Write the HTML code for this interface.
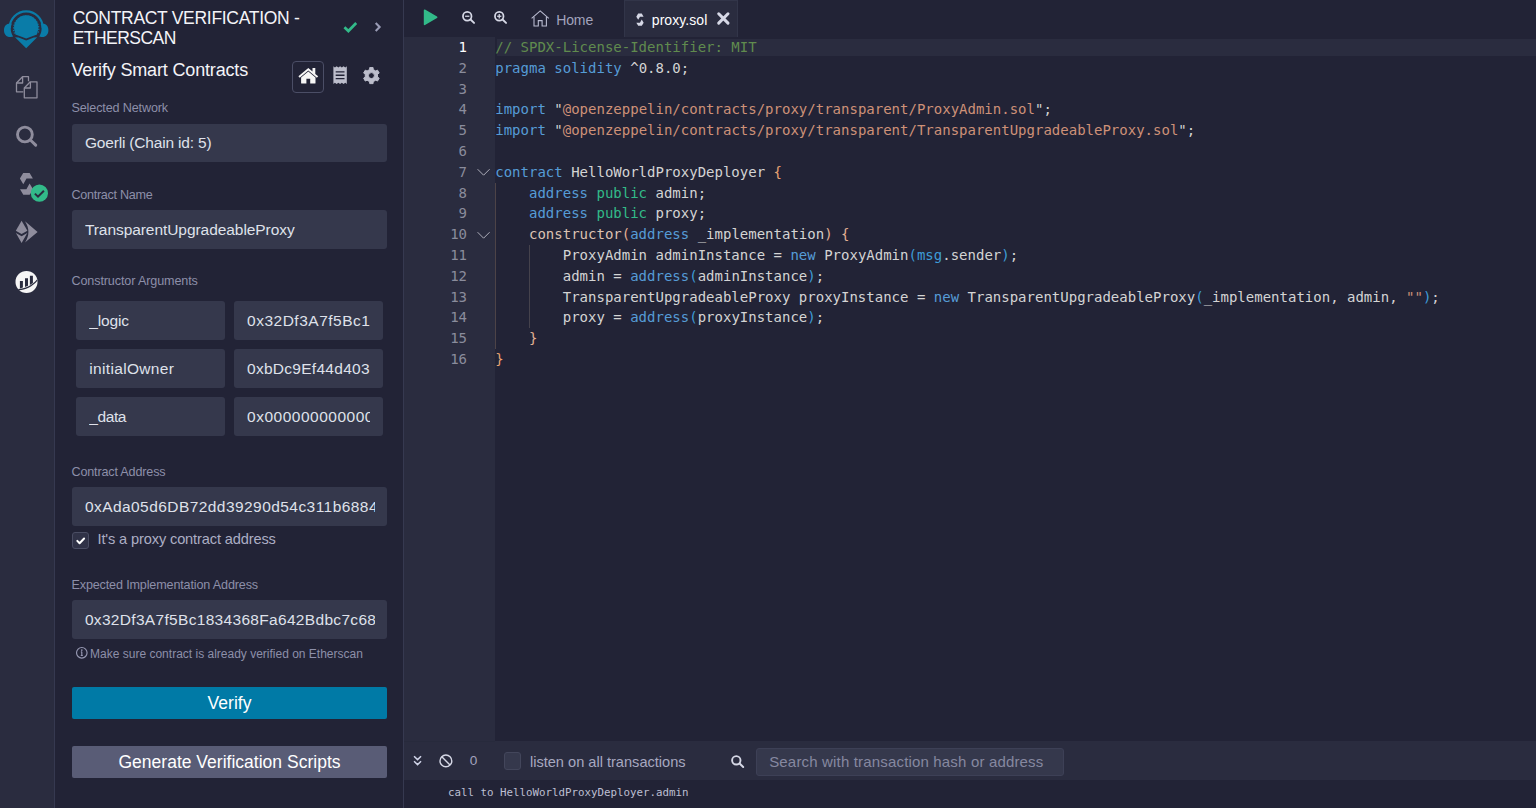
<!DOCTYPE html>
<html lang="en">
<head>
<meta charset="utf-8">
<title>Remix - Ethereum IDE</title>
<style>
html,body{margin:0;padding:0;}
body{width:1536px;height:808px;overflow:hidden;background:#222336;position:relative;font-family:"Liberation Sans",sans-serif;}
.t{position:absolute;white-space:pre;display:block;}
.b{position:absolute;}
.m{font-family:"DejaVu Sans Mono","Liberation Mono",monospace;}
svg{position:absolute;overflow:visible;}
.code{position:absolute;left:495.25px;white-space:pre;font-family:"DejaVu Sans Mono","Liberation Mono",monospace;font-size:14px;line-height:21px;height:21px;color:#d4d4d4;letter-spacing:0.004px;}
.ln{position:absolute;left:404px;width:63px;text-align:right;white-space:pre;font-family:"DejaVu Sans Mono","Liberation Mono",monospace;font-size:14px;line-height:21px;height:21px;color:#8a8c9c;}
.k{color:#569cd6}.c{color:#608b4e}.s{color:#ce9178}.g{color:#32ba89}.o{color:#e8a272}.p{color:#3e9cd6}.q{color:#dcc2b2}.r{color:#e2b094}
</style>
</head>
<body>

<nav id="icon-panel">
<div class="b " style="left:0px;top:0px;width:54px;height:808px;background:#2a2c3f;"></div>
<div class="b " style="left:54px;top:0px;width:1px;height:808px;background:#363950;"></div>
<svg style="left:0px;top:0px" width="54" height="54" viewBox="0 0 54 54" ><path d="M9.6 28 A16.6 16.6 0 0 1 42.8 28" fill="none" stroke="#0a7ca8" stroke-width="2.2"/><path d="M11.2 23.6 C6 23.2 4 26.6 4 30.2 C4 34.2 6.4 37.4 11 37 L13.2 36.4 C10.4 32.4 10.2 27.6 11.8 23.7 Z" fill="#0a7ca8"/><path d="M41.2 23.6 C46.4 23.2 48.4 26.6 48.4 30.2 C48.4 34.2 46 37.4 41.4 37 L39.2 36.4 C42 32.4 42.2 27.6 40.6 23.7 Z" fill="#0a7ca8"/><path d="M26.2 15.2 A12.2 12.2 0 0 1 37.6 31.8 L37 34.4 L26.2 38.4 L15.4 34.4 L14.8 31.8 A12.2 12.2 0 0 1 26.2 15.2 Z" fill="#0a7ca8"/><path d="M14.6 33.6 A12.6 12.6 0 1 1 37.8 33.6" fill="none" stroke="#0a7ca8" stroke-width="1.2" stroke-dasharray="1.3 1.3"/><path d="M15 37.3 L18.6 37.4 L26.2 40.6 L33.8 37.4 L37.2 37.3 L26.2 48.2 Z" fill="#0a7ca8"/></svg>
<svg style="left:15px;top:75px" width="24" height="25" viewBox="0 0 24 25" ><g fill="none" stroke="#8f8d9d" stroke-width="1.3" stroke-linejoin="round"><path d="M8.3 16.8 H1.5 V8 L7.5 1.7 H13.5 V6.3"/><path d="M7.6 1.8 V8 H1.6"/><path d="M9.3 13 L15.3 6.8 H22 V22.8 H9.3 Z"/><path d="M15.4 6.9 V13 H9.4"/></g></svg>
<svg style="left:15px;top:125px" width="24" height="23" viewBox="0 0 24 23" ><circle cx="9.9" cy="9.5" r="7.4" fill="none" stroke="#8f8d9d" stroke-width="2.9"/><path d="M15.4 15 L20.7 20.1" stroke="#8f8d9d" stroke-width="3" stroke-linecap="round"/></svg>
<svg style="left:19px;top:172px" width="15" height="24" viewBox="0 0 15 24" ><path d="M4.2 1 H10.6 L13.9 6.6 H7.5 L4.3 12.2 L0.9 6.6 Z" fill="#8f8d9d"/><path d="M10.7 22.8 H4.3 L1 17.2 H7.4 L10.6 11.6 L14 17.2 Z" fill="#8f8d9d"/></svg>
<svg style="left:30px;top:184px" width="19" height="19" viewBox="0 0 19 19" ><circle cx="9.4" cy="9.2" r="8.6" fill="#32ba89"/><path d="M4.9 9.6 L8 12.7 L13.9 6.7" fill="none" stroke="#2a2c3f" stroke-width="2"/></svg>
<svg style="left:15px;top:220px" width="24" height="24" viewBox="0 0 24 24" ><path d="M6.6 0.8 L12.4 10.7 L6.6 14 L0.8 10.7 Z" fill="#8f8d9d"/><path d="M0.9 13 L6.6 16.3 L12.3 13 L6.6 22.9 Z" fill="#8f8d9d"/><path d="M10 1.2 L22.6 11.9 L10 22.6 C14.6 15.6 14.6 8.2 10 1.2 Z" fill="#8f8d9d"/></svg>
<svg style="left:15px;top:270.1px" width="23" height="23" viewBox="0 0 23 23" ><circle cx="11.5" cy="11.9" r="11" fill="#f6f6f6"/><path d="M4.9 10.9 H7.9 V17.6 L4.9 18.4 Z M10 8.3 H13 V15.8 L10 17.1 Z M14.9 5.7 H17.9 V13 L14.9 14.9 Z" fill="#2a2c3f"/><path d="M3 18.9 C10 18.6 16.6 15.6 22 9.4 L22.4 10.8 C17 17 10.4 20 4 20.2 Z" fill="#2a2c3f"/></svg>
</nav>
<aside id="side-panel">
<svg style="left:343px;top:21px" width="15" height="12" viewBox="0 0 15 12" ><path d="M1.4 6.2 L5.4 10 L13.2 2" fill="none" stroke="#32ba89" stroke-width="2.7"/></svg>
<svg style="left:374px;top:21.5px" width="8" height="10" viewBox="0 0 8 10" ><path d="M1.7 1.1 L5.6 5 L1.7 8.9" fill="none" stroke="#9a9cb6" stroke-width="2.1"/></svg>
<div class="b" style="left:292.2px;top:60.8px;width:32px;height:32.6px;box-sizing:border-box;border:1px solid #4b4e66;border-radius:4px;"></div>
<svg style="left:298.1px;top:66.6px" width="21" height="17" viewBox="0 0 21 17" ><path d="M10.3 4.6 L3.1 10.5 V15.9 A0.6 0.6 0 0 0 3.7 16.5 H8.4 V11.7 H12.2 V16.5 H16.9 A0.6 0.6 0 0 0 17.5 15.9 V10.5 Z" fill="#f6f6f6"/><path d="M0.4 9.3 L1.7 10.8 L10.3 3.6 L18.9 10.8 L20.2 9.3 L17.3 6.9 V1.1 H14.5 V4.5 L10.3 1 Z" fill="#f6f6f6"/></svg>
<svg style="left:332.7px;top:66px" width="14.4" height="18.2" viewBox="0 0 15 18.5" preserveAspectRatio="none"><path d="M0.4 0.3 L2 1.4 L3.8 0.2 L5.6 1.4 L7.4 0.2 L9.2 1.4 L11 0.2 L12.8 1.4 L14.4 0.3 V18.2 L12.8 17.1 L11 18.3 L9.2 17.1 L7.4 18.3 L5.6 17.1 L3.8 18.3 L2 17.1 L0.4 18.2 Z M2.8 5.3 V6.5 H12 V5.3 Z M2.8 8.7 V10.1 H12 V8.7 Z M2.8 12.2 V13.6 H12 V12.2 Z" fill="#bcbdcb" fill-rule="evenodd"/></svg>
<svg style="left:362px;top:66px" width="19" height="19" viewBox="0 0 19 19" ><path d="M7.61 3.56 L7.71 1.58 L11.09 1.58 L11.19 3.56 L13.74 5.03 L15.51 4.13 L17.19 7.05 L15.53 8.13 L15.53 11.07 L17.19 12.15 L15.51 15.07 L13.74 14.17 L11.19 15.64 L11.09 17.62 L7.71 17.62 L7.61 15.64 L5.06 14.17 L3.29 15.07 L1.61 12.15 L3.27 11.07 L3.27 8.13 L1.61 7.05 L3.29 4.13 L5.06 5.03 Z M6.40 9.60 a3.0 3.0 0 1 0 6.0 0 a3.0 3.0 0 1 0 -6.0 0 Z" fill="#bcbdcb" fill-rule="evenodd" stroke="#bcbdcb" stroke-width="1" stroke-linejoin="round"/></svg>
<div class="b " style="left:403px;top:0px;width:1px;height:808px;background:#363950;"></div>
<span class="t " style="left:72.70px;top:4.14px;font-size:17.5px;line-height:28px;height:28px;color:#f4f4f8;letter-spacing:-0.3px;">CONTRACT VERIFICATION -</span>
<span class="t " style="left:72.70px;top:23.94px;font-size:17.5px;line-height:28px;height:28px;color:#f4f4f8;letter-spacing:-0.54px;">ETHERSCAN</span>
<span class="t " style="left:71.50px;top:56.36px;font-size:18px;line-height:29px;height:29px;color:#f4f4f8;letter-spacing:-0.16px;">Verify Smart Contracts</span>
<span class="t " style="left:71.50px;top:97.73px;font-size:12.6px;line-height:20px;height:20px;color:#8d8fa9;letter-spacing:-0.14px;">Selected Network</span>
<div class="b " style="left:71.8px;top:123.6px;width:315.6px;height:38.8px;background:#35384c;border-radius:3px;"></div>
<span class="t " style="left:84.90px;top:130.33px;font-size:15.5px;line-height:25px;height:25px;color:#dfe1ea;letter-spacing:-0.18px;width:289.40000000000003px;overflow:hidden;">Goerli (Chain id: 5)</span>
<span class="t " style="left:71.50px;top:184.83px;font-size:12.6px;line-height:20px;height:20px;color:#8d8fa9;letter-spacing:-0.29px;">Contract Name</span>
<div class="b " style="left:71.8px;top:210.3px;width:315.6px;height:38.8px;background:#35384c;border-radius:3px;"></div>
<span class="t " style="left:84.90px;top:217.23px;font-size:15.5px;line-height:25px;height:25px;color:#dfe1ea;letter-spacing:-0.06px;width:289.40000000000003px;overflow:hidden;">TransparentUpgradeableProxy</span>
<span class="t " style="left:71.50px;top:271.43px;font-size:12.6px;line-height:20px;height:20px;color:#8d8fa9;letter-spacing:-0.12px;">Constructor Arguments</span>
<div class="b " style="left:76.2px;top:301.2px;width:148.8px;height:38.8px;background:#35384c;border-radius:3px;"></div>
<span class="t " style="left:89.30px;top:307.93px;font-size:15.5px;line-height:25px;height:25px;color:#dfe1ea;letter-spacing:-0.14px;width:122.60000000000001px;overflow:hidden;">_logic</span>
<div class="b " style="left:233.8px;top:301.2px;width:149.4px;height:38.8px;background:#35384c;border-radius:3px;"></div>
<span class="t " style="left:247.00px;top:307.93px;font-size:15.5px;line-height:25px;height:25px;color:#dfe1ea;letter-spacing:0.51px;width:122.6px;overflow:hidden;">0x32Df3A7f5Bc1</span>
<div class="b " style="left:76.2px;top:349.0px;width:148.8px;height:38.8px;background:#35384c;border-radius:3px;"></div>
<span class="t " style="left:89.30px;top:355.73px;font-size:15.5px;line-height:25px;height:25px;color:#dfe1ea;letter-spacing:0.33px;width:122.60000000000001px;overflow:hidden;">initialOwner</span>
<div class="b " style="left:233.8px;top:349.0px;width:149.4px;height:38.8px;background:#35384c;border-radius:3px;"></div>
<span class="t " style="left:247.00px;top:355.73px;font-size:15.5px;line-height:25px;height:25px;color:#dfe1ea;letter-spacing:0.28px;width:122.6px;overflow:hidden;">0xbDc9Ef44d403</span>
<div class="b " style="left:76.2px;top:396.8px;width:148.8px;height:38.8px;background:#35384c;border-radius:3px;"></div>
<span class="t " style="left:89.30px;top:403.53px;font-size:15.5px;line-height:25px;height:25px;color:#dfe1ea;letter-spacing:-0.4px;width:122.60000000000001px;overflow:hidden;">_data</span>
<div class="b " style="left:233.8px;top:396.8px;width:149.4px;height:38.8px;background:#35384c;border-radius:3px;"></div>
<span class="t " style="left:247.00px;top:403.53px;font-size:15.5px;line-height:25px;height:25px;color:#dfe1ea;letter-spacing:0.51px;width:122.6px;overflow:hidden;">0x000000000000</span>
<span class="t " style="left:71.50px;top:461.53px;font-size:12.6px;line-height:20px;height:20px;color:#8d8fa9;letter-spacing:-0.17px;">Contract Address</span>
<div class="b " style="left:71.8px;top:487.1px;width:315.6px;height:38.8px;background:#35384c;border-radius:3px;"></div>
<span class="t " style="left:84.90px;top:494.23px;font-size:15.5px;line-height:25px;height:25px;color:#dfe1ea;letter-spacing:0.44px;width:289.8px;overflow:hidden;">0xAda05d6DB72dd39290d54c311b6884</span>
<div class="b" style="left:71.9px;top:531.9px;width:17.4px;height:17.5px;box-sizing:border-box;background:#303247;border:1px solid #4a4d63;border-radius:3px;"></div>
<svg style="left:75.6px;top:537px" width="10" height="8" viewBox="0 0 10 8"><path d="M1.3 3.9 L3.6 6.2 L8.1 1.5" fill="none" stroke="#fff" stroke-width="2" stroke-linecap="round" stroke-linejoin="round"/></svg>
<span class="t " style="left:97.50px;top:528.24px;font-size:14.6px;line-height:23px;height:23px;color:#acaec4;letter-spacing:-0.13px;">It's a proxy contract address</span>
<span class="t " style="left:71.50px;top:574.83px;font-size:12.6px;line-height:20px;height:20px;color:#8d8fa9;letter-spacing:-0.15px;">Expected Implementation Address</span>
<div class="b " style="left:71.8px;top:600.2px;width:315.6px;height:38.8px;background:#35384c;border-radius:3px;"></div>
<span class="t " style="left:84.90px;top:607.33px;font-size:15.5px;line-height:25px;height:25px;color:#dfe1ea;letter-spacing:0.316px;width:289.8px;overflow:hidden;">0x32Df3A7f5Bc1834368Fa642Bdbc7c68</span>
<svg style="left:75.7px;top:647.2px" width="11.6" height="11.6" viewBox="0 0 11 11"><circle cx="5.5" cy="5.5" r="5" fill="none" stroke="#9698b2" stroke-width="1.1"/><path d="M5.5 4.6V8.1M4.5 8.1H6.5M4.6 4.6H5.6" stroke="#9698b2" stroke-width="1.1" fill="none"/><circle cx="5.5" cy="2.9" r="0.8" fill="#9698b2"/></svg>
<span class="t " style="left:90.10px;top:644.84px;font-size:12px;line-height:19px;height:19px;color:#8d8fa9;">Make sure contract is already verified on Etherscan</span>
<div class="b " style="left:71.5px;top:686.6px;width:315.9px;height:32.8px;background:#007aa6;border-radius:2px;"></div>
<span class="t " style="left:71.50px;top:688.84px;font-size:17.5px;line-height:28px;height:28px;color:#ffffff;width:316px;text-align:center;">Verify</span>
<div class="b " style="left:71.5px;top:745.6px;width:315.9px;height:32.8px;background:#595c76;border-radius:2px;"></div>
<span class="t " style="left:71.50px;top:747.54px;font-size:17.5px;line-height:28px;height:28px;color:#ffffff;letter-spacing:0.01px;width:316px;text-align:center;">Generate Verification Scripts</span>
</aside>
<main id="main-panel">
<div class="b " style="left:404px;top:36.8px;width:91px;height:704.5px;background:#2a2c3f;"></div>
<div class="b " style="left:624.2px;top:0px;width:114.2px;height:36.8px;background:#2a2c3f;box-sizing:border-box;border:1px solid #323549;border-bottom:none;"></div>
<span class="t " style="left:556.20px;top:8.75px;font-size:14px;line-height:22px;height:22px;color:#a2a3bd;letter-spacing:-0.11px;">Home</span>
<span class="t " style="left:651.80px;top:8.75px;font-size:14px;line-height:22px;height:22px;color:#ffffff;letter-spacing:0.06px;">proxy.sol</span>
<div class="b " style="left:496.5px;top:39px;width:1039.5px;height:16.9px;background:#2a2c3f;"></div>
<div class="ln" style="top:36.9px;color:#ffffff;">1</div>
<div class="code" style="top:36.9px"><span class="c">// SPDX-License-Identifier: MIT</span></div>
<div class="ln" style="top:57.7px;">2</div>
<div class="code" style="top:57.7px"><span class="k">pragma</span> <span class="k">solidity</span> ^0.8.0;</div>
<div class="ln" style="top:78.5px;">3</div>
<div class="ln" style="top:99.3px;">4</div>
<div class="code" style="top:99.3px"><span class="k">import</span> "<span class="s">@openzeppelin/contracts/proxy/transparent/ProxyAdmin.sol</span>";</div>
<div class="ln" style="top:120.1px;">5</div>
<div class="code" style="top:120.1px"><span class="k">import</span> "<span class="s">@openzeppelin/contracts/proxy/transparent/TransparentUpgradeableProxy.sol</span>";</div>
<div class="ln" style="top:140.9px;">6</div>
<div class="ln" style="top:161.7px;">7</div>
<div class="code" style="top:161.7px"><span class="k">contract</span> HelloWorldProxyDeployer <span class="o">{</span></div>
<div class="ln" style="top:182.5px;">8</div>
<div class="code" style="top:182.5px">    <span class="k">address</span> <span class="g">public</span> admin;</div>
<div class="ln" style="top:203.3px;">9</div>
<div class="code" style="top:203.3px">    <span class="k">address</span> <span class="g">public</span> proxy;</div>
<div class="ln" style="top:224.1px;">10</div>
<div class="code" style="top:224.1px">    <span class="q">constructor</span><span class="r">(</span><span class="k">address</span> _implementation<span class="r">) {</span></div>
<div class="ln" style="top:244.9px;">11</div>
<div class="code" style="top:244.9px">        ProxyAdmin adminInstance = <span class="k">new</span> ProxyAdmin<span class="p">(</span><span class="p">msg</span>.sender<span class="p">)</span>;</div>
<div class="ln" style="top:265.7px;">12</div>
<div class="code" style="top:265.7px">        admin = <span class="k">address</span><span class="p">(</span>adminInstance<span class="p">)</span>;</div>
<div class="ln" style="top:286.5px;">13</div>
<div class="code" style="top:286.5px">        TransparentUpgradeableProxy proxyInstance = <span class="k">new</span> TransparentUpgradeableProxy<span class="p">(</span>_implementation, admin, <span class="s">""</span><span class="p">)</span>;</div>
<div class="ln" style="top:307.3px;">14</div>
<div class="code" style="top:307.3px">        proxy = <span class="k">address</span><span class="p">(</span>proxyInstance<span class="p">)</span>;</div>
<div class="ln" style="top:328.1px;">15</div>
<div class="code" style="top:328.1px">    <span class="r">}</span></div>
<div class="ln" style="top:348.9px;">16</div>
<div class="code" style="top:348.9px"><span class="o">}</span></div>
<div class="b " style="left:495px;top:182.6px;width:1px;height:166.4px;background:#4d4347;"></div>
<div class="b " style="left:529px;top:245.0px;width:1px;height:83.2px;background:#45424c;"></div>
<section id="terminal">
<div class="b " style="left:404px;top:741.1px;width:1132px;height:39.0px;background:#2a2c3f;"></div>
<div class="b " style="left:404px;top:740.6px;width:91px;height:1px;background:#272a3c;"></div>
<span class="t " style="left:469.70px;top:750.29px;font-size:13.6px;line-height:22px;height:22px;color:#a2a3bd;">0</span>
<div class="b " style="left:503.5px;top:752.3px;width:17.7px;height:17.6px;background:#35384c;box-sizing:border-box;border:1px solid #43465b;border-radius:3px;"></div>
<span class="t " style="left:529.90px;top:750.94px;font-size:14.6px;line-height:23px;height:23px;color:#a7a8c0;">listen on all transactions</span>
<div class="b " style="left:755.5px;top:748.3px;width:308.5px;height:27.3px;background:#35384c;box-sizing:border-box;border:1px solid #3d4056;border-radius:3px;"></div>
<span class="t " style="left:769.20px;top:749.80px;font-size:15px;line-height:24px;height:24px;color:#8688a0;letter-spacing:0.17px;">Search with transaction hash or address</span>
<span class="t m" style="left:448.10px;top:783.99px;font-size:10.8px;line-height:17px;height:17px;color:#bdbfd2;">call to HelloWorldProxyDeployer.admin</span>
</section>
<div id="main-icons">
<svg style="left:423px;top:9px" width="15" height="17" viewBox="0 0 15 17" ><path d="M1.6 1.2 L13.6 8.3 L1.6 15.4 Z" fill="#32ba89" stroke="#32ba89" stroke-width="1.6" stroke-linejoin="round"/></svg>
<svg style="left:461.6px;top:10.8px" width="13.6" height="13.6" viewBox="0 0 14 14" ><circle cx="5.4" cy="5.4" r="4.4" fill="none" stroke="#d6d8e6" stroke-width="1.8"/><path d="M8.8 8.8 L12.4 12.2" stroke="#d6d8e6" stroke-width="2" stroke-linecap="round"/><path d="M3.2 5.4 H7.6" stroke="#d6d8e6" stroke-width="1.3"/></svg>
<svg style="left:494.2px;top:10.8px" width="13.6" height="13.6" viewBox="0 0 14 14" ><circle cx="5.4" cy="5.4" r="4.4" fill="none" stroke="#d6d8e6" stroke-width="1.8"/><path d="M8.8 8.8 L12.4 12.2" stroke="#d6d8e6" stroke-width="2" stroke-linecap="round"/><path d="M3.2 5.4 H7.6" stroke="#d6d8e6" stroke-width="1.3"/><path d="M5.4 3.2 V7.6" stroke="#d6d8e6" stroke-width="1.3"/></svg>
<svg style="left:531px;top:9.5px" width="19" height="17" viewBox="0 0 19 17" ><path d="M0.6 8.3 L9.2 0.9 L17.8 8.3" fill="none" stroke="#b9bbd0" stroke-width="1.1"/><path d="M3 6.8 V16 H7.3 V10.6 H11.1 V16 H15.4 V6.8" fill="none" stroke="#b9bbd0" stroke-width="1.1"/></svg>
<svg style="left:635px;top:13.2px" width="10" height="13.5" viewBox="0 0 15 24" ><path d="M4.2 1 H10.6 L13.9 6.6 H7.5 L4.3 12.2 L0.9 6.6 Z" fill="#d6d8e6"/><path d="M10.7 22.8 H4.3 L1 17.2 H7.4 L10.6 11.6 L14 17.2 Z" fill="#d6d8e6"/></svg>
<svg style="left:717px;top:12.2px" width="13" height="13" viewBox="0 0 13 13" ><path d="M1.7 1.8 L11 11.1 M11 1.8 L1.7 11.1" stroke="#d6d8e6" stroke-width="3" stroke-linecap="round"/></svg>
<svg style="left:477px;top:168.1px" width="14" height="9" viewBox="0 0 14 9" ><path d="M0.6 1.2 L6.6 7.2 L12.6 1.2" fill="none" stroke="#aeaeba" stroke-width="1"/></svg>
<svg style="left:477px;top:230.5px" width="14" height="9" viewBox="0 0 14 9" ><path d="M0.6 1.2 L6.6 7.2 L12.6 1.2" fill="none" stroke="#aeaeba" stroke-width="1"/></svg>
<svg style="left:412.5px;top:755px" width="9.3" height="11.5" viewBox="0 0 9 11.5" ><path d="M0.9 1.2 L4.4 4.6 L7.9 1.2 M0.9 6.2 L4.4 9.6 L7.9 6.2" fill="none" stroke="#d0d4e8" stroke-width="1.5"/></svg>
<svg style="left:438.5px;top:753.7px" width="14" height="14" viewBox="0 0 14 14" ><circle cx="6.9" cy="6.9" r="5.9" fill="none" stroke="#d6d8e6" stroke-width="1.4"/><path d="M2.8 2.8 L11 11" stroke="#d6d8e6" stroke-width="1.4"/></svg>
<svg style="left:731px;top:755.2px" width="14" height="14" viewBox="0 0 14 14" ><circle cx="5.3" cy="5.3" r="4.2" fill="none" stroke="#d6d8e6" stroke-width="1.9"/><path d="M8.6 8.6 L12.2 12" stroke="#d6d8e6" stroke-width="2" stroke-linecap="round"/></svg>
</div>
</main>
</body>
</html>
